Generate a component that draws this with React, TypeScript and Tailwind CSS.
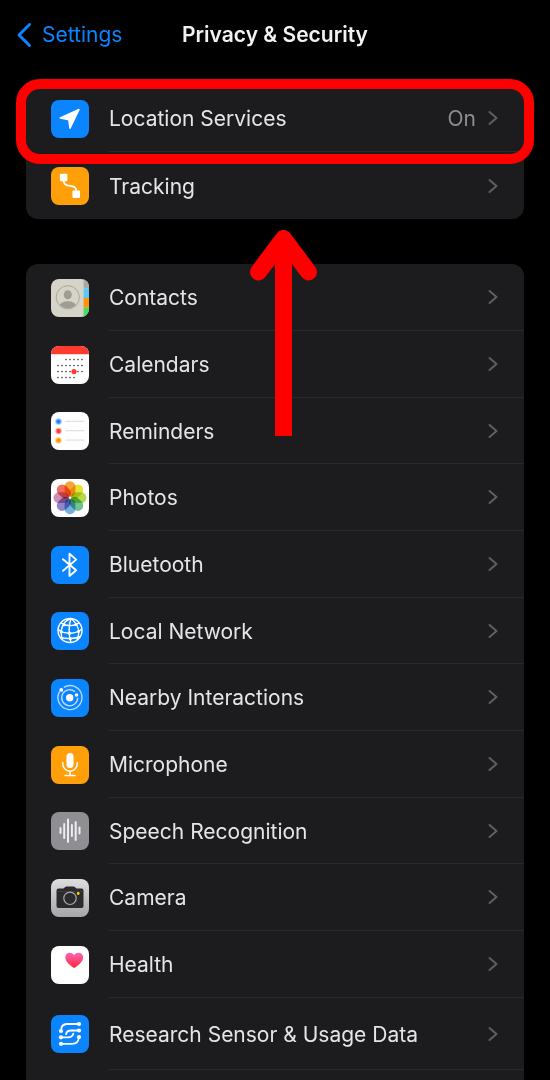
import type { ReactNode } from 'react'
import clsx from 'clsx'

type Item = {
  label: string
  tile: string
  icon: ReactNode
  value?: string
  highlighted?: boolean
}

const calendarDots = [
  { y: 13, xs: [15, 19, 23, 27, 31] },
  { y: 19, xs: [7, 11, 15, 19, 23, 27, 31] },
  { y: 25, xs: [7, 11, 15, 19, 27, 31] },
  { y: 31, xs: [7, 11, 15, 19, 23] },
]

const petals = ['#f9a13a', '#ece032', '#b4d94a', '#6fc196', '#74aee3', '#9186c8', '#cf8cb5', '#f0705c']

const speechBars = [
  [9.5, 16, 21],
  [13.2, 12, 26],
  [17, 7.5, 30],
  [20.9, 13, 24],
  [24.7, 10, 28],
  [28.5, 15.5, 21.5],
]

const topItems: Item[] = [
  {
    label: 'Location Services',
    value: 'On',
    highlighted: true,
    tile: 'bg-[#0a84ff]',
    icon: <path d="M28 9.5 19 28.2 17.9 19.6 9.3 18Z" fill="#fff" stroke="#fff" strokeWidth="1.6" strokeLinejoin="round" />,
  },
  {
    label: 'Tracking',
    tile: 'bg-[#ff9f0a]',
    icon: (
      <>
        <path d="M12.5 13c0 10 12.8 2 12.8 11" fill="none" stroke="#fff" strokeWidth="1.8" />
        <rect x="8.8" y="6.8" width="7.6" height="7.4" rx="1.2" fill="#fff" />
        <rect x="21.4" y="23.6" width="7.6" height="7.4" rx="1.2" fill="#fff" />
      </>
    ),
  },
]

const appItems: Item[] = [
  {
    label: 'Contacts',
    tile: 'bg-[#d6d3c8]',
    icon: (
      <>
        <clipPath id="avatar">
          <circle cx="16.8" cy="18.3" r="11" />
        </clipPath>
        <rect x="32.6" width="5.4" height="9.5" fill="#aaa8a2" />
        <rect x="32.6" y="9.5" width="5.4" height="9.5" fill="#5ac8fa" />
        <rect x="32.6" y="19" width="5.4" height="9.5" fill="#ff9500" />
        <rect x="32.6" y="28.5" width="5.4" height="9.5" fill="#4cd964" />
        <circle cx="16.8" cy="18.3" r="11.6" fill="none" stroke="#a9a69d" strokeWidth="1" />
        <g fill="#a09d94" clipPath="url(#avatar)">
          <ellipse cx="16.8" cy="15.8" rx="4" ry="4.5" />
          <ellipse cx="16.8" cy="27.3" rx="8.4" ry="5" />
        </g>
      </>
    ),
  },
  {
    label: 'Calendars',
    tile: 'bg-white',
    icon: (
      <>
        <rect width="38" height="8.2" fill="#ff3b30" />
        {calendarDots.map((row) => row.xs.map((x) => <circle key={`${x}-${row.y}`} cx={x} cy={row.y + 0.5} r="0.85" fill="#444" />))}
        <circle cx="23" cy="25.5" r="2.6" fill="#ff3b30" />
      </>
    ),
  },
  {
    label: 'Reminders',
    tile: 'bg-white',
    icon: (
      <>
        {['#1a83ff', '#ff3b30', '#ff9500'].map((color, i) => (
          <g key={color}>
            <circle cx="7.5" cy={9.6 + i * 9.4} r="3.3" fill={color} fillOpacity="0.4" />
            <circle cx="7.5" cy={9.6 + i * 9.4} r="2.2" fill={color} />
            <path d={`M14.5 ${9.3 + i * 9.4}H33.5`} stroke="#d1d1d6" strokeWidth="0.8" />
          </g>
        ))}
      </>
    ),
  },
  {
    label: 'Photos',
    tile: 'bg-white',
    icon: petals.map((color, i) => (
      <rect
        key={color}
        className="mix-blend-multiply"
        x="13.6"
        y="2.2"
        width="10.8"
        height="15.5"
        rx="5.4"
        fill={color}
        transform={`rotate(${i * 45} 19 18.7)`}
      />
    )),
  },
  {
    label: 'Bluetooth',
    tile: 'bg-[#0a84ff]',
    icon: (
      <path
        d="M12 13.2 25.2 24.2 18.5 30V7.8L25.2 13.6 12 24.8"
        fill="none"
        stroke="#fff"
        strokeWidth="1.9"
        strokeLinecap="round"
        strokeLinejoin="round"
      />
    ),
  },
  {
    label: 'Local Network',
    tile: 'bg-[#0a84ff]',
    icon: (
      <>
        <g fill="none" stroke="#fff" strokeWidth="1.4">
          <circle cx="19" cy="18.5" r="12" />
          <path d="M20 6.5C12 9 8 18 11.5 27.5M20 6.5C17.5 13 17.5 23 20 30.5M20 6.5C27 12 29.5 20 26 28" />
          <path d="M10 11C15 14.5 23 14.5 28 11M7 17.5C14 23 25 22 31 17M9 25.5C15 27 24 27 29.5 24.5" />
        </g>
        <g fill="#fff">
          <circle cx="13" cy="12.8" r="1.5" />
          <circle cx="25" cy="12.6" r="1.5" />
          <circle cx="10.4" cy="19.8" r="1.6" />
          <circle cx="18.4" cy="21.3" r="1.7" />
          <circle cx="27.5" cy="19.5" r="1.6" />
          <circle cx="19.3" cy="26.7" r="1.5" />
        </g>
      </>
    ),
  },
  {
    label: 'Nearby Interactions',
    tile: 'bg-[#0a84ff]',
    icon: (
      <>
        <g fill="none" stroke="#fff" strokeOpacity="0.7" strokeWidth="1.4">
          <path d="M12.8 8.3A12 12 0 1 1 8.7 12.4" />
          <path d="M26.7 18.7A8 8 0 1 1 24 12.7" />
        </g>
        <g fill="#fff">
          <circle cx="18.7" cy="18.7" r="3.7" />
          <circle cx="10.3" cy="10.9" r="1.9" />
          <circle cx="25.5" cy="16" r="1.8" />
        </g>
      </>
    ),
  },
  {
    label: 'Microphone',
    tile: 'bg-[#ff9f0a]',
    icon: (
      <>
        <rect x="15.5" y="7" width="7" height="15" rx="3.5" fill="#fff" />
        <path
          d="M11.8 16.5v1.5a7.2 7.2 0 0 0 14.4 0v-1.5M19 25.2v4.2M14 29.5h10"
          fill="none"
          stroke="#fff"
          strokeWidth="1.5"
          strokeLinecap="round"
        />
      </>
    ),
  },
  {
    label: 'Speech Recognition',
    tile: 'bg-[#8e8e93]',
    icon: speechBars.map(([x, y1, y2]) => (
      <path key={x} d={`M${x} ${y1}V${y2}`} stroke="#ededf0" strokeWidth="2" strokeLinecap="round" />
    )),
  },
  {
    label: 'Camera',
    tile: 'bg-linear-to-b from-[#dededf] to-[#a6a6aa]',
    icon: (
      <>
        <path
          d="M7.5 9.5H12.5L14.2 8Q14.8 7.5 15.5 7.500H22.5Q23.2 7.5 23.8 8L25.5 9.5H30.5Q32.5 9.5 32.5 11.5V27Q32.5 29 30.5 29H7.5Q5.5 29 5.5 27V11.5Q5.5 9.5 7.5 9.500Z"
          fill="#2b2b2d"
        />
        <path d="M5.5 12.5H32.5" stroke="#48484a" strokeWidth="0.6" />
        <circle cx="19" cy="19.3" r="6.200" fill="#2b2b2d" stroke="#a9a9ad" strokeWidth="1.2" />
        <circle cx="27.2" cy="14.5" r="1.4" fill="#ffd60a" />
      </>
    ),
  },
  {
    label: 'Health',
    tile: 'bg-white',
    icon: (
      <>
        <linearGradient id="heart" x1="0" y1="0" x2="0" y2="1">
          <stop offset="0" stopColor="#fb62b5" />
          <stop offset="1" stopColor="#ff2b3a" />
        </linearGradient>
        <path
          d="M23.2 22C20 20 14.3 16 14.3 11.5C14.3 8.5 16.3 6.7 18.8 6.7C20.8 6.7 22.3 7.7 23.2 9.2C24.1 7.7 25.6 6.7 27.6 6.7C30.1 6.7 32.1 8.5 32.1 11.5C32.1 16 26.4 20 23.2 22Z"
          fill="url(#heart)"
        />
      </>
    ),
  },
  {
    label: 'Research Sensor & Usage Data',
    tile: 'bg-[#0a84ff]',
    icon: (
      <>
        <path
          d="M10 16C10 11 12 9 16 9H27.8M10 22.3H17Q21.5 22.3 22.3 18.6M15 19.2Q15.8 15.5 20 15.5H27.8M10 28.8H21C26 28.8 27.8 26.500 27.8 22"
          fill="none"
          stroke="#fff"
          strokeWidth="1.8"
          strokeLinecap="round"
        />
        <g fill="#fff">
          {[16, 22.3, 28.8].map((y) => (
            <circle key={y} cx="10" cy={y} r="2.100" />
          ))}
          {[9, 15.5, 22].map((y) => (
            <circle key={y} cx="28" cy={y} r="2.100" />
          ))}
        </g>
      </>
    ),
  },
]

function Chevron() {
  return (
    <svg viewBox="0 0 10 16" className="h-4 w-2.5 shrink-0" aria-hidden="true">
      <path d="M1.5 2 8.5 8 1.5 14" fill="none" stroke="#5f5f63" strokeWidth="2" strokeLinecap="round" strokeLinejoin="round" />
    </svg>
  )
}

function Row({ item, last, tall }: { item: Item; last?: boolean; tall?: boolean }) {
  return (
    <li className={clsx('relative', tall ? 'h-[72px]' : 'h-[67px] nth-[3n]:h-[66px]')}>
      <a href="#" className="flex h-full items-center gap-5 pl-[25px]">
        <span className={clsx('size-[38px] shrink-0 overflow-hidden rounded-lg', item.tile)}>
          <svg viewBox="0 0 38 38" className="size-full" aria-hidden="true">
            {item.icon}
          </svg>
        </span>
        <span className={clsx('flex h-full flex-1 items-center gap-3 pr-[26px]', !last && 'border-b border-[#2a2a2c]')}>
          <span className="flex-1 pt-0.5">{item.label}</span>
          {item.value && <span className="pt-0.5 text-[#8e8e93]">{item.value}</span>}
          <Chevron />
        </span>
      </a>
      {item.highlighted && (
        <span className="pointer-events-none absolute -inset-x-2.5 -top-1.5 -bottom-3 rounded-3xl border-[10px] border-[#ff0000]" />
      )}
    </li>
  )
}

export default function App() {
  return (
    <div className="flex h-screen flex-col overflow-hidden bg-black font-[Inter,sans-serif] text-[21px] leading-7 text-[#e5e5e7]">
      <header className="grid grid-cols-[1fr_auto_1fr] items-center px-4 pt-[21px]">
        <a href="#" className="flex items-center gap-2.5 text-[#0a84ff]">
          <svg viewBox="0 0 16 26" className="h-[26px] w-4" aria-hidden="true">
            <path d="M13.5 2.5 3 13 13.5 23.5" fill="none" stroke="currentColor" strokeWidth="3" strokeLinecap="round" strokeLinejoin="round" />
          </svg>
          Settings
        </a>
        <h1 className="font-semibold text-[#f2f2f4]">Privacy &amp; Security</h1>
      </header>

      <main className="flex flex-1 flex-col px-[26px] pt-9">
        <ul className="z-10 rounded-xl bg-[#1c1c1e]">
          {topItems.map((item, i) => (
            <Row key={item.label} item={item} last={i === topItems.length - 1} />
          ))}
        </ul>

        <section className="relative mt-[45px] flex-1 rounded-t-xl bg-[#1c1c1e]">
          <ul>
            {appItems.map((item, i) => (
              <Row key={item.label} item={item} tall={i === appItems.length - 1} />
            ))}
          </ul>
          <svg viewBox="0 0 68 207" className="pointer-events-none absolute -top-[34px] left-[45%] h-[207px] w-[68px]" aria-hidden="true">
            <path d="M8.5 42 33.5 8.5 58.5 42" fill="none" stroke="#f00" strokeWidth="17" strokeLinecap="round" strokeLinejoin="round" />
            <path d="M33.5 10V206" stroke="#f00" strokeWidth="17" />
          </svg>
        </section>
      </main>
    </div>
  )
}
